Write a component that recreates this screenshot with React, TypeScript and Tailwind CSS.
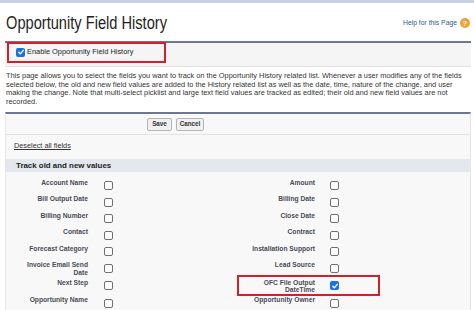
import React from "react";

function Box({ checked }: { checked?: boolean }) {
  if (checked) {
    return (
      <span className="flex h-[9px] w-[9px] items-center justify-center rounded-[2px] bg-[#1a73e2]">
        <svg viewBox="0 0 10 10" className="h-[8px] w-[8px]">
          <path d="M2.2 5.3 L4.2 7.3 L7.9 2.9" stroke="white" strokeWidth="1.7" fill="none" strokeLinecap="round" strokeLinejoin="round" />
        </svg>
      </span>
    );
  }
  return <span className="block h-[9px] w-[9px] rounded-[2px] border border-[#707070] bg-white" />;
}

const left = [
  "Account Name",
  "Bill Output Date",
  "Billing Number",
  "Contact",
  "Forecast Category",
  "Invoice Email Send Date",
  "Next Step",
  "Opportunity Name",
];
const right = [
  "Amount",
  "Billing Date",
  "Close Date",
  "Contract",
  "Installation Support",
  "Lead Source",
  "OFC File Output DateTime",
  "Opportunity Owner",
];

function Label({ text }: { text: string }) {
  return (
    <div className="pl-[14px] pt-[2.5px] text-right text-[6.7px] font-bold leading-[7.5px] text-[#4a4a56]">
      {text}
    </div>
  );
}

export default function App() {
  return (
    <div className="relative h-[310px] w-[474px] overflow-hidden bg-white font-['Liberation_Sans',Arial,sans-serif]">
      <div className="h-[3px] bg-[#c6d2e6]" />
      <div className="flex h-[38px] items-start justify-between pl-[6px] pr-[4px]">
        <div className="mt-[9px] origin-left scale-x-[0.77] whitespace-nowrap text-[19px] leading-[22px] text-[#222]">
          Opportunity Field History
        </div>
        <div className="mt-[15px] flex items-center gap-[3px]">
          <span className="text-[6.8px] leading-[10px] text-[#1f5aa0]">Help for this Page</span>
          <span className="flex h-[10px] w-[10px] items-center justify-center rounded-full bg-[#eea33a] text-[7px] font-bold leading-none text-white">
            ?
          </span>
        </div>
      </div>

      <div className="ml-[5px] mr-[3px]">
        <div className="h-[26px] border-t-2 border-b border-t-[#6b7793] border-b-[#e2e2e2] bg-[#f5f5f5]">
          <div className="ml-[11px] mt-[4px] flex h-[10px] items-center gap-[2px]">
            <Box checked />
            <span className="text-[7.4px] leading-[10px] text-[#222]">Enable Opportunity Field History</span>
          </div>
        </div>

        <p className="mt-[5px] w-[462px] pl-[1px] text-[7.4px] leading-[8.5px] text-[#333]">
          This page allows you to select the fields you want to track on the Opportunity History related list. Whenever a user modifies any of the fields selected below, the old and new field values are added to the History related list as well as the date, time, nature of the change, and user making the change. Note that multi-select picklist and large text field values are tracked as edited; their old and new field values are not recorded.
        </p>

        <div className="mt-[6px] border-t-2 border-l border-r border-t-[#6b7793] border-l-[#e6e6e6] border-r-[#e6e6e6] bg-[#f8f8f8] pb-[20px]">
          <div className="flex gap-[4px] border-b border-[#e3e3e3] pb-[3px] pl-[141px] pt-[4px]">
            <button className="h-[13px] w-[25px] rounded-[2px] border border-[#b5b5b5] bg-[#f0f0f0] text-[6.3px] font-bold leading-none text-[#333]">
              Save
            </button>
            <button className="h-[13px] w-[28px] rounded-[2px] border border-[#b5b5b5] bg-[#f0f0f0] text-[6.3px] font-bold leading-none text-[#333]">
              Cancel
            </button>
          </div>
          <div className="pl-[8px] pt-[5.5px] pb-[9.5px] text-[7.3px] leading-[9px] text-[#333]">
            <span className="underline">Deselect all fields</span>
          </div>
          <div className="h-[13px] bg-[#e4e7ee] pl-[10px] text-[7.9px] font-bold leading-[13px] text-[#222]">
            Track old and new values
          </div>
          <div className="pt-[4px]">
            {left.map((l, i) => (
              <div key={l} className="grid min-h-[16.5px] grid-cols-[82px_145px_82px_1fr] items-start">
                <Label text={l} />
                <div className="pl-[16px] pt-[5px]">
                  <Box />
                </div>
                <Label text={right[i]} />
                <div className="pl-[15px] pt-[5px]">
                  <Box checked={right[i].startsWith("OFC")} />
                </div>
              </div>
            ))}
          </div>
        </div>
      </div>

      <div className="pointer-events-none absolute left-[7px] top-[42px] h-[21px] w-[159px] border-2 border-[#d21f2b]" />
      <div className="pointer-events-none absolute left-[237px] top-[275px] h-[21px] w-[143px] border-2 border-[#d21f2b]" />
    </div>
  );
}
